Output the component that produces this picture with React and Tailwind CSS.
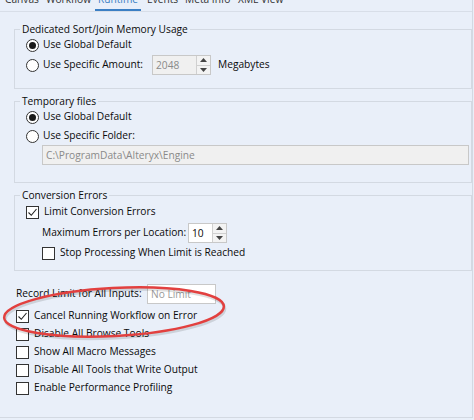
import React from "react";

const font = { fontFamily: '"Open Sans", "Noto Sans", sans-serif' };

function Radio({ checked, label }) {
  return (
    <div className="flex items-center h-[16px]">
      <span className="w-[13px] h-[13px] rounded-full border border-[#333] bg-white flex items-center justify-center shrink-0">
        {checked && <span className="w-[7px] h-[7px] rounded-full bg-[#1a1a1a]" />}
      </span>
      <span className="ml-[4px] whitespace-nowrap">{label}</span>
    </div>
  );
}

function Check({ checked, label, h = "h-[18px]" }) {
  return (
    <div className={`flex items-center ${h}`}>
      <span className="w-[13px] h-[13px] border border-[#333] bg-white flex items-center justify-center shrink-0">
        {checked && (
          <svg width="11" height="11" viewBox="0 0 11 11">
            <path d="M1.5 5.5 L4.3 8.3 L9.5 2" fill="none" stroke="#222" strokeWidth="1.1" />
          </svg>
        )}
      </span>
      <span className="ml-[5px] whitespace-nowrap">{label}</span>
    </div>
  );
}

function Spinner() {
  return (
    <div className="w-[14px] h-full border-l border-[#d0d0d0] flex flex-col bg-[#f3f3f3]">
      <div className="flex-1 flex items-center justify-center border-b border-[#d0d0d0]">
        <svg width="7" height="4" viewBox="0 0 7 4"><path d="M0 4 L3.5 0 L7 4 Z" fill="#444" /></svg>
      </div>
      <div className="flex-1 flex items-center justify-center">
        <svg width="7" height="4" viewBox="0 0 7 4"><path d="M0 0 L3.5 4 L7 0 Z" fill="#444" /></svg>
      </div>
    </div>
  );
}

function Group({ title, children, className = "" }) {
  return (
    <fieldset className={`border border-[#d3d9e2] ${className}`}>
      <legend className="ml-[5px] px-[2px] leading-[15px] text-[10.2px]">{title}</legend>
      <div className="pl-[11px]">{children}</div>
    </fieldset>
  );
}

export default function App() {
  return (
    <div
      className="relative w-[474px] h-[420px] bg-[#e9eff9] overflow-hidden text-[10.2px] font-medium text-[#0a0a0a]"
      style={font}
    >
      <div className="w-[473px] h-[418px] border-r border-b border-[#d3d9e2]">
        {/* tabs */}
        <div className="h-[12px] overflow-hidden border-b border-[#d8dee8]">
          <div className="flex -mt-[9px] pl-[5px] text-[#333]">
            <div className="w-[41px] h-[21px] leading-[16px]">Canvas</div>
            <div className="w-[49px] h-[21px] leading-[16px]">Workflow</div>
            <div className="w-[46px] h-[20px] leading-[16px] text-center text-[#3b7fc4] border-b-2 border-[#3b7fc4]">Runtime</div>
            <div className="ml-[6px] w-[38px] h-[21px] leading-[16px]">Events</div>
            <div className="w-[53px] h-[21px] leading-[16px]">Meta Info</div>
            <div className="h-[21px] leading-[16px]">XML View</div>
          </div>
        </div>

        <div className="pl-[14px]">
          <Group title="Dedicated Sort/Join Memory Usage" className="mt-[10px] pb-[13px]">
            <Radio checked label="Use Global Default" />
            <div className="flex items-center h-[20px] mt-[2px]">
              <div className="w-[123px]">
                <Radio label="Use Specific Amount:" />
              </div>
              <div className="ml-[3px] w-[59px] h-[20px] border border-[#c8c8c8] bg-[#f0f0f0] flex">
                <span className="flex-1 pl-[3px] leading-[18px] text-[#8a8a8a]">2048</span>
                <Spinner />
              </div>
              <span className="ml-[7px]">Megabytes</span>
            </div>
          </Group>

          <Group title="Temporary files" className="mt-[5px] pb-[17px]">
            <Radio checked label="Use Global Default" />
            <div className="mt-[3px]">
              <Radio label="Use Specific Folder:" />
            </div>
            <div className="ml-[16px] mt-[1px] mr-[2px] h-[20px] border border-[#c8c8c8] bg-[#f0f0f0] pl-[3px] leading-[18px] text-[#8a8a8a]">
              C:\ProgramData\Alteryx\Engine
            </div>
          </Group>

          <Group title="Conversion Errors" className="mt-[5px] pb-[8px]">
            <div className="mt-[1px]">
              <Check checked label="Limit Conversion Errors" h="h-[16px]" />
            </div>
            <div className="flex items-center h-[20px] ml-[16px] mt-[3px]">
              <span className="w-[146px] whitespace-nowrap">Maximum Errors per Location:</span>
              <div className="w-[39px] h-[20px] border border-[#c8c8c8] bg-white flex">
                <span className="flex-1 pl-[3px] leading-[18px]">10</span>
                <Spinner />
              </div>
            </div>
            <div className="ml-[16px] mt-[1px]">
              <Check label="Stop Processing When Limit is Reached" />
            </div>
          </Group>

          <div className="pl-[2px] mt-[13px]">
            <div className="flex items-center h-[20px]">
              <span className="w-[131px] whitespace-nowrap">Record Limit for All Inputs:</span>
              <div className="w-[69px] h-[20px] border border-[#c8c8c8] bg-white pl-[3px] leading-[18px] text-[#9a9a9a]">
                No Limit
              </div>
            </div>
            <div className="mt-[3px]">
              <Check checked label="Cancel Running Workflow on Error" />
              <Check label="Disable All Browse Tools" />
              <Check label="Show All Macro Messages" />
              <Check label="Disable All Tools that Write Output" />
              <Check label="Enable Performance Profiling" />
            </div>
          </div>
        </div>
      </div>

      <svg
        className="absolute left-0 top-0 pointer-events-none"
        width="474"
        height="420"
        viewBox="0 0 474 420"
      >
        <ellipse cx="115" cy="314" rx="110" ry="24" transform="rotate(-3 115 314)" fill="none" stroke="#000" strokeOpacity="0.12" strokeWidth="3" />
        <ellipse cx="114" cy="312" rx="110" ry="24" transform="rotate(-3 114 312)" fill="none" stroke="#e2403f" strokeWidth="2.5" />
      </svg>
    </div>
  );
}
